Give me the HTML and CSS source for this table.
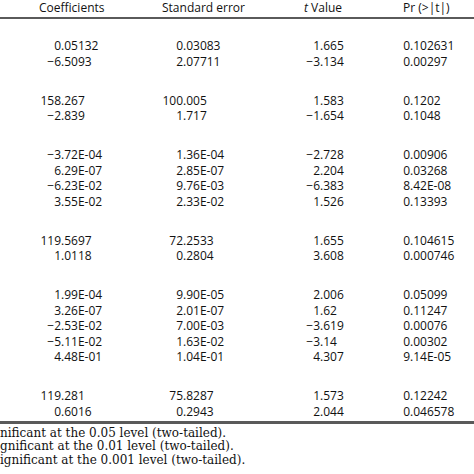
FILE: index.html
```html
<!DOCTYPE html>
<html>
<head>
<meta charset="utf-8">
<link rel="stylesheet" href="styles.css">
</head>
<body>
<div class="table">
  <div class="row head">
    <div class="hcell">Coefficients</div>
    <div class="hcell">Standard error</div>
    <div class="hcell"><i>t</i> Value</div>
    <div class="hcell">Pr (&gt;|t|)</div>
  </div>
  <div class="body">
    <div class="group">
      <div class="row"><div class="cell c1"><span class="i">0</span>.05132</div><div class="cell c2"><span class="i">0</span>.03083</div><div class="cell c3"><span class="i">1</span>.665</div><div class="cell c4"><span class="i">0</span>.102631</div></div>
      <div class="row"><div class="cell c1"><span class="i">−6</span>.5093</div><div class="cell c2"><span class="i">2</span>.07711</div><div class="cell c3"><span class="i">−3</span>.134</div><div class="cell c4"><span class="i">0</span>.00297</div></div>
    </div>
    <div class="group">
      <div class="row"><div class="cell c1"><span class="i">158</span>.267</div><div class="cell c2"><span class="i">100</span>.005</div><div class="cell c3"><span class="i">1</span>.583</div><div class="cell c4"><span class="i">0</span>.1202</div></div>
      <div class="row"><div class="cell c1"><span class="i">−2</span>.839</div><div class="cell c2"><span class="i">1</span>.717</div><div class="cell c3"><span class="i">−1</span>.654</div><div class="cell c4"><span class="i">0</span>.1048</div></div>
    </div>
    <div class="group">
      <div class="row"><div class="cell c1"><span class="i">−3</span>.72E-04</div><div class="cell c2"><span class="i">1</span>.36E-04</div><div class="cell c3"><span class="i">−2</span>.728</div><div class="cell c4"><span class="i">0</span>.00906</div></div>
      <div class="row"><div class="cell c1"><span class="i">6</span>.29E-07</div><div class="cell c2"><span class="i">2</span>.85E-07</div><div class="cell c3"><span class="i">2</span>.204</div><div class="cell c4"><span class="i">0</span>.03268</div></div>
      <div class="row"><div class="cell c1"><span class="i">−6</span>.23E-02</div><div class="cell c2"><span class="i">9</span>.76E-03</div><div class="cell c3"><span class="i">−6</span>.383</div><div class="cell c4"><span class="i">8</span>.42E-08</div></div>
      <div class="row"><div class="cell c1"><span class="i">3</span>.55E-02</div><div class="cell c2"><span class="i">2</span>.33E-02</div><div class="cell c3"><span class="i">1</span>.526</div><div class="cell c4"><span class="i">0</span>.13393</div></div>
    </div>
    <div class="group">
      <div class="row"><div class="cell c1"><span class="i">119</span>.5697</div><div class="cell c2"><span class="i">72</span>.2533</div><div class="cell c3"><span class="i">1</span>.655</div><div class="cell c4"><span class="i">0</span>.104615</div></div>
      <div class="row"><div class="cell c1"><span class="i">1</span>.0118</div><div class="cell c2"><span class="i">0</span>.2804</div><div class="cell c3"><span class="i">3</span>.608</div><div class="cell c4"><span class="i">0</span>.000746</div></div>
    </div>
    <div class="group">
      <div class="row"><div class="cell c1"><span class="i">1</span>.99E-04</div><div class="cell c2"><span class="i">9</span>.90E-05</div><div class="cell c3"><span class="i">2</span>.006</div><div class="cell c4"><span class="i">0</span>.05099</div></div>
      <div class="row"><div class="cell c1"><span class="i">3</span>.26E-07</div><div class="cell c2"><span class="i">2</span>.01E-07</div><div class="cell c3"><span class="i">1</span>.62</div><div class="cell c4"><span class="i">0</span>.11247</div></div>
      <div class="row"><div class="cell c1"><span class="i">−2</span>.53E-02</div><div class="cell c2"><span class="i">7</span>.00E-03</div><div class="cell c3"><span class="i">−3</span>.619</div><div class="cell c4"><span class="i">0</span>.00076</div></div>
      <div class="row"><div class="cell c1"><span class="i">−5</span>.11E-02</div><div class="cell c2"><span class="i">1</span>.63E-02</div><div class="cell c3"><span class="i">−3</span>.14</div><div class="cell c4"><span class="i">0</span>.00302</div></div>
      <div class="row"><div class="cell c1"><span class="i">4</span>.48E-01</div><div class="cell c2"><span class="i">1</span>.04E-01</div><div class="cell c3"><span class="i">4</span>.307</div><div class="cell c4"><span class="i">9</span>.14E-05</div></div>
    </div>
    <div class="group">
      <div class="row"><div class="cell c1"><span class="i">119</span>.281</div><div class="cell c2"><span class="i">75</span>.8287</div><div class="cell c3"><span class="i">1</span>.573</div><div class="cell c4"><span class="i">0</span>.12242</div></div>
      <div class="row"><div class="cell c1"><span class="i">0</span>.6016</div><div class="cell c2"><span class="i">0</span>.2943</div><div class="cell c3"><span class="i">2</span>.044</div><div class="cell c4"><span class="i">0</span>.046578</div></div>
    </div>
  </div>
  <div class="notes">
    <p>nificant at the 0.05 level (two-tailed).</p>
    <p>gnificant at the 0.01 level (two-tailed).</p>
    <p>ignificant at the 0.001 level (two-tailed).</p>
  </div>
</div>
</body>
</html>
```
FILE: styles.css
```css
html, body {
  margin: 0;
  padding: 0;
  background: #ffffff;
}
body {
  width: 474px;
  height: 474px;
  overflow: hidden;
  color: #111111;
  font-family: "Open Sans", Lato, sans-serif;
  font-size: 12px;
}
.table {
  width: 474px;
}
.row {
  display: grid;
  grid-template-columns: 123px 142px 99px 1fr;
  padding-left: 39px;
  line-height: 15.5px;
  white-space: nowrap;
}
.head {
  line-height: 15px;
  padding-bottom: 2px;
  border-bottom: 2px solid #5a5a5a;
}
.hcell {
  display: block;
}
.hcell i {
  font-style: italic;
}
.body {
  padding-top: 19px;
  padding-bottom: 2px;
  border-bottom: 3px solid #5a5a5a;
}
.group + .group {
  margin-top: 23.5px;
}
.cell {
  display: flex;
}
.i {
  display: inline-block;
  text-align: right;
}
.c1 .i { width: 22px; }
.c2 .i { width: 21px; }
.c3 .i { width: 16px; }
.c4 .i { width: 7px; }
.notes {
  margin-top: 3px;
  font-family: "DejaVu Serif", "Liberation Serif", serif;
  font-size: 12px;
  line-height: 13.3px;
  color: #111111;
}
.notes p {
  margin: 0;
  white-space: nowrap;
}
```
